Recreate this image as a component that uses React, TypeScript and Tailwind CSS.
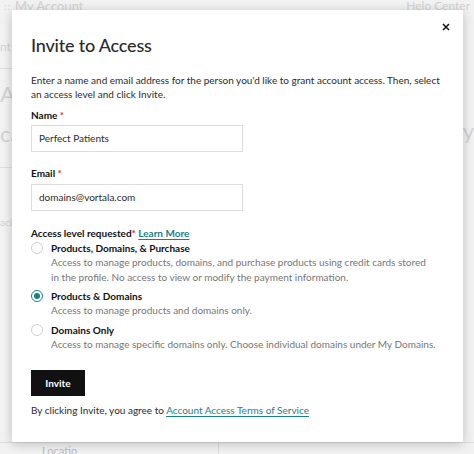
import { useState } from "react";

const accessLevels = [
  {
    id: "purchase",
    label: "Products, Domains, & Purchase",
    description: [
      "Access to manage products, domains, and purchase products using credit cards stored",
      "in the profile. No access to view or modify the payment information.",
    ],
  },
  {
    id: "products",
    label: "Products & Domains",
    description: ["Access to manage products and domains only."],
  },
  {
    id: "domains",
    label: "Domains Only",
    description: ["Access to manage specific domains only. Choose individual domains under My Domains."],
  },
];

function BackgroundPage() {
  return (
    <div className="absolute inset-0 text-[#d2d2d2]">
      <div className="flex items-center justify-between px-[4px] text-[13px] leading-[12px]">
        <span className="flex items-center gap-[4px]">
          <span className="text-[10px] tracking-[1px]">::</span>
          <span>My Account</span>
        </span>
        <span className="text-[12px]">Help Center</span>
      </div>
      <div className="mt-[28px] text-[12px] leading-[14px]">nt</div>
      <div className="mt-[14px] h-px w-[12px] bg-[#dddddd]" />
      <div className="mt-[14px] text-[22px] leading-[22px]">AC</div>
      <div className="mt-[18px] text-[22px] leading-[22px]">ca</div>
      <div className="mt-[22px] h-px w-[12px] bg-[#dddddd]" />
      <div className="mt-[48px] text-[10px] leading-[12px]">acid</div>
      <div className="absolute right-[0px] top-[120px] text-[22px] leading-[22px]">y</div>
      <div className="absolute bottom-0 left-0 right-0 flex h-[12px] border-t border-[#dddddd]">
        <div className="w-[219px] border-r border-[#dddddd] pl-[42px] text-[11px] leading-[16px] text-[#bbbbbb]">
          Locatio
        </div>
      </div>
    </div>
  );
}

function RadioDot({ checked }: { checked: boolean }) {
  return (
    <span
      className={
        checked
          ? "flex h-[12px] w-[12px] shrink-0 items-center justify-center rounded-full border border-[#1b7f87] bg-white"
          : "flex h-[12px] w-[12px] shrink-0 items-center justify-center rounded-full border border-[#cfcfcf] bg-white"
      }
    >
      {checked ? <span className="h-[6px] w-[6px] rounded-full bg-[#1b7f87]" /> : null}
    </span>
  );
}

export default function App() {
  const [selectedLevel, setSelectedLevel] = useState("products");

  return (
    <div
      className="relative h-[454px] w-[474px] overflow-hidden bg-[#f2f2f2]"
      style={{ fontFamily: "Lato, 'Noto Sans', sans-serif" }}
    >
      <BackgroundPage />

      <div className="absolute left-[12px] top-[10px] h-[432px] w-[451px] bg-white px-[19px] shadow-[0_2px_10px_rgba(0,0,0,0.22)]">
        <button className="absolute right-[9px] top-[9px] flex h-[16px] w-[16px] items-center justify-center text-[#111111]">
          <svg width="8" height="8" viewBox="0 0 8 8" fill="none" stroke="currentColor" strokeWidth="1.5">
            <path d="M1 1l6 6M7 1l-6 6" />
          </svg>
        </button>

        <h1 className="pt-[24px] text-[18px] font-medium leading-[22px] tracking-[-0.2px] text-[#2b2b2b]">
          Invite to Access
        </h1>

        <p className="mt-[17px] text-[10px] leading-[14px] text-[#2b2b2b]">
          Enter a name and email address for the person you'd like to grant account access. Then, select an access level
          and click Invite.
        </p>

        <label className="mt-[7px] block text-[10px] font-bold leading-[14px] text-[#111111]">
          Name <span className="text-[#d4380d]">*</span>
        </label>
        <div className="mt-[3px] flex h-[27px] w-[212px] items-center border border-[#dcdcdc] px-[7px] text-[10px] text-[#2b2b2b]">
          Perfect Patients
        </div>

        <label className="mt-[14px] block text-[10px] font-bold leading-[14px] text-[#111111]">
          Email <span className="text-[#d4380d]">*</span>
        </label>
        <div className="mt-[4px] flex h-[27px] w-[212px] items-center border border-[#dcdcdc] px-[7px] text-[10px] text-[#2b2b2b]">
          domains@vortala.com
        </div>

        <div className="mt-[15px] text-[10px] font-bold leading-[14px] text-[#111111]">
          Access level requested<span className="text-[#d4380d]">*</span>{" "}
          <a className="text-[#1b7f87] underline underline-offset-2">Learn More</a>
        </div>

        <div className="mt-[1px] flex flex-col gap-[5px]">
          {accessLevels.map((level) => (
            <div
              key={level.id}
              className="flex cursor-pointer gap-[8px]"
              onClick={() => setSelectedLevel(level.id)}
            >
              <div className="pt-[1px]">
                <RadioDot checked={selectedLevel === level.id} />
              </div>
              <div className="w-[392px]">
                <div className="text-[10px] font-bold leading-[14px] text-[#111111]">{level.label}</div>
                {level.description.map((line) => (
                  <div key={line} className="whitespace-nowrap text-[10px] leading-[14.5px] text-[#767676]">
                    {line}
                  </div>
                ))}
              </div>
            </div>
          ))}
        </div>

        <button className="mt-[19px] flex h-[26px] w-[54px] items-center justify-center bg-[#111111] text-[10px] font-bold text-white">
          Invite
        </button>

        <p className="mt-[7px] text-[10px] leading-[14px] text-[#2b2b2b]">
          By clicking Invite, you agree to{" "}
          <a className="text-[#1b7f87] underline underline-offset-2">Account Access Terms of Service</a>
        </p>
      </div>
    </div>
  );
}
